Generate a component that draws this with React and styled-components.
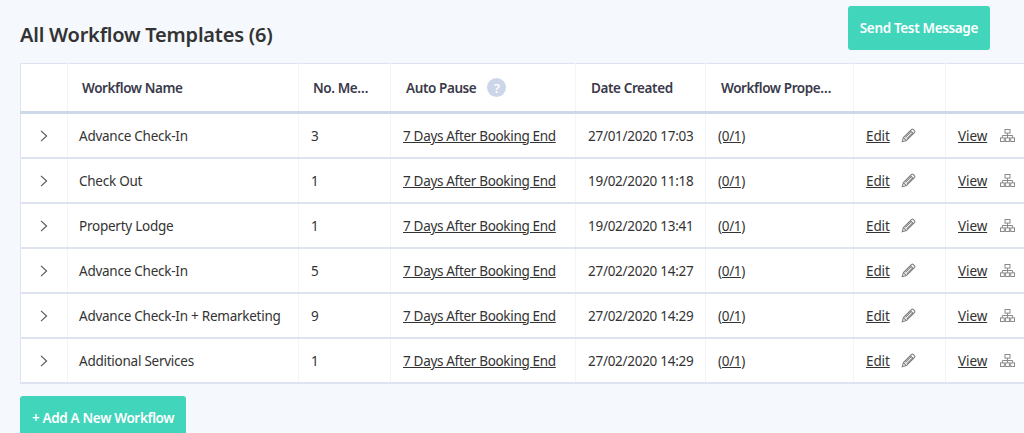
import React from "react";
import styled, { createGlobalStyle } from "styled-components";

const rows = [
  { name: "Advance Check-In", steps: 3, created: "27/01/2020 17:03" },
  { name: "Check Out", steps: 1, created: "19/02/2020 11:18" },
  { name: "Property Lodge", steps: 1, created: "19/02/2020 13:41" },
  { name: "Advance Check-In", steps: 5, created: "27/02/2020 14:27" },
  { name: "Advance Check-In + Remarketing", steps: 9, created: "27/02/2020 14:29" },
  { name: "Additional Services", steps: 1, created: "27/02/2020 14:29" },
];

function Chevron() {
  return (
    <svg width="8" height="12" viewBox="0 0 8 12" fill="none" stroke="#555" strokeWidth="1.1">
      <path d="M1 0.8 L6.6 6 L1 11.2" />
    </svg>
  );
}

function Pencil() {
  return (
    <svg width="15" height="15" viewBox="0 0 15 15" fill="none" stroke="#808080" strokeWidth="1.1">
      <path d="M1.2 13.8 L2.4 9.6 L10.6 1.4 Q11.4 0.8 12.2 1.4 L13.6 2.8 Q14.2 3.6 13.6 4.4 L5.4 12.6 Z" />
      <path d="M2.4 9.6 L5.4 12.6 M9.4 2.6 L12.4 5.6 M4.4 9.4 L10.6 3.2 M5.8 10.8 L12 4.6" />
    </svg>
  );
}

function Sitemap() {
  return (
    <svg width="15" height="13" viewBox="0 0 15 13" fill="none" stroke="#8a8a8a" strokeWidth="1">
      <rect x="5" y="0.5" width="5" height="3.6" />
      <rect x="0.5" y="8.9" width="3.8" height="3.6" />
      <rect x="5.6" y="8.9" width="3.8" height="3.6" />
      <rect x="10.7" y="8.9" width="3.8" height="3.6" />
      <path d="M7.5 4.1 V8.9 M2.4 8.9 V6.5 H12.6 V8.9" />
    </svg>
  );
}

export default function App() {
  return (
    <Page>
      <GlobalStyle />
      <TopBar>
        <Title>All Workflow Templates (6)</Title>
        <Button>Send Test Message</Button>
      </TopBar>
      <Table>
        <colgroup>
          <col style={{ width: 47 }} />
          <col style={{ width: 231 }} />
          <col style={{ width: 92 }} />
          <col style={{ width: 185 }} />
          <col style={{ width: 130 }} />
          <col style={{ width: 148 }} />
          <col style={{ width: 92 }} />
          <col style={{ width: 92 }} />
        </colgroup>
        <thead>
          <tr>
            <HeadCell />
            <HeadCell $inset={14}>Workflow Name</HeadCell>
            <HeadCell $inset={14}>No. Me…</HeadCell>
            <HeadCell>
              <PauseLabel>
                Auto Pause <HelpBadge>?</HelpBadge>
              </PauseLabel>
            </HeadCell>
            <HeadCell>Date Created</HeadCell>
            <HeadCell>Workflow Prope…</HeadCell>
            <HeadCell />
            <HeadCell />
          </tr>
        </thead>
        <tbody>
          {rows.map((row, i) => (
            <tr key={i}>
              <ChevronCell>
                <Chevron />
              </ChevronCell>
              <NameCell>{row.name}</NameCell>
              <Cell>{row.steps}</Cell>
              <Cell>
                <TextLink>7 Days After Booking End</TextLink>
              </Cell>
              <DateCell>{row.created}</DateCell>
              <Cell>
                <TextLink>(0/1)</TextLink>
              </Cell>
              <ActionCell>
                <ActionLink>
                  <TextLink>Edit</TextLink>
                  <Pencil />
                </ActionLink>
              </ActionCell>
              <ActionCell>
                <ActionLink $gap={13}>
                  <TextLink>View</TextLink>
                  <Sitemap />
                </ActionLink>
              </ActionCell>
            </tr>
          ))}
        </tbody>
      </Table>
      <Button>+ Add A New Workflow</Button>
    </Page>
  );
}

const GlobalStyle = createGlobalStyle`
  html, body {
    margin: 0;
    height: 433px;
    overflow: hidden;
    background: #f5f8fc;
  }
`;
const Page = styled.div`
  width: 1024px;
  height: 433px;
  overflow: hidden;
  box-sizing: border-box;
  padding: 6px 0 0 20px;
  font-family: "Noto Sans", "Liberation Sans", sans-serif;
  color: #333;
`;
const TopBar = styled.div`
  display: flex;
  justify-content: space-between;
  align-items: center;
  width: 970px;
  margin-bottom: 13px;
`;
const Title = styled.h1`
  margin: 12px 0 0;
  font-size: 20px;
  font-weight: 600;
  letter-spacing: -0.22px;
  color: #333;
`;
const Button = styled.button`
  display: block;
  height: 44px;
  padding: 0 12px;
  border: 0;
  border-radius: 3px;
  background: #41d5bb;
  color: #fff;
  font-family: inherit;
  font-size: 13.5px;
  font-weight: 600;
  letter-spacing: -0.35px;
`;
const Table = styled.table`
  table-layout: fixed;
  width: 1017px;
  border-collapse: collapse;
  background: #fff;
  border: 1px solid #dde3f0;
  margin-bottom: 12px;
  font-size: 13.5px;
  letter-spacing: -0.32px;
`;
const HeadCell = styled.th`
  height: 49px;
  padding: 0 0 0 ${(p) => p.$inset || 15}px;
  box-sizing: border-box;
  text-align: left;
  font-weight: 600;
  letter-spacing: -0.4px;
  color: #3a3a4a;
  white-space: nowrap;
  border-right: 1px solid #f2f4f7;
  border-bottom: 3px solid #cdd9e8;
`;
const Cell = styled.td`
  height: 45px;
  padding: 1px 0 0 12px;
  box-sizing: border-box;
  white-space: nowrap;
  border-right: 1px solid #f2f4f7;
  border-bottom: 2px solid #dde3f0;
`;
const NameCell = styled(Cell)`
  padding-left: 11px;
  letter-spacing: -0.25px;
`;
const DateCell = styled(Cell)`
  letter-spacing: -0.28px;
`;
const ActionCell = styled(Cell)`
  letter-spacing: -0.1px;
`;
const ChevronCell = styled(Cell)`
  padding: 1px 0 0 19px;
  line-height: 0;
`;
const PauseLabel = styled.span`
  display: inline-flex;
  align-items: center;
  gap: 11px;
`;
const HelpBadge = styled.span`
  display: inline-flex;
  align-items: center;
  justify-content: center;
  width: 19px;
  height: 19px;
  border-radius: 50%;
  background: #cbd7e8;
  color: #fff;
  font-size: 13px;
`;
const TextLink = styled.a`
  color: #333;
  text-decoration: underline;
`;
const ActionLink = styled.span`
  display: inline-flex;
  align-items: center;
  gap: ${(p) => p.$gap || 11}px;
`;
